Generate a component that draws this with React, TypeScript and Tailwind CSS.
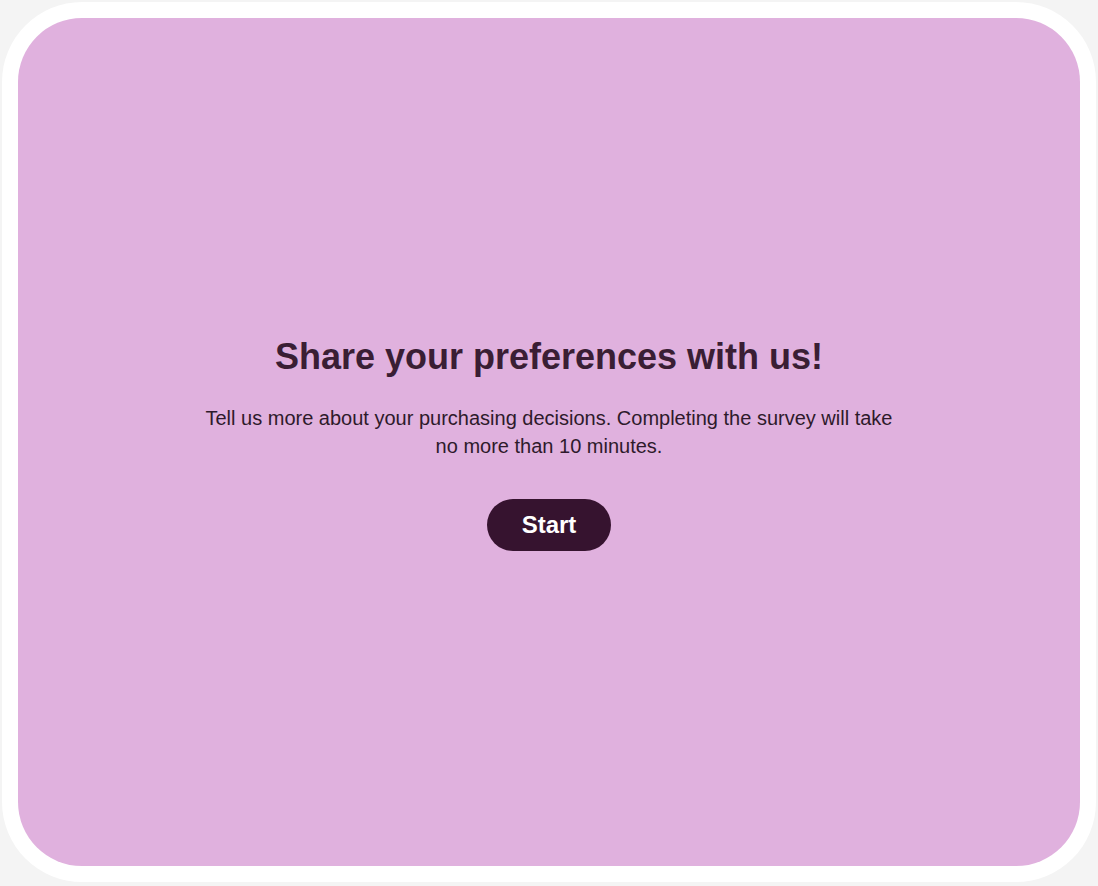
const App = () => {
  return (
    <div className="w-full h-[886px] bg-[#f4f4f4] px-[2px] pt-[2px]" style={{ fontFamily: '"Liberation Sans", Arial, sans-serif' }}>
      <div className="h-[880px] bg-white rounded-[80px] p-4">
        <div className="h-full bg-[#e0b1de] rounded-[64px] pt-[4px] flex flex-col items-center justify-center text-center">
          <h1 className="text-[36px] leading-[40px] font-bold text-[#3a1e34]">Share your preferences with us!</h1>
          <p className="mt-[27px] max-w-[700px] text-[20px] leading-[28px] text-[#2e1a2b]">
            Tell us more about your purchasing decisions. Completing the survey will take no more than 10 minutes.
          </p>
          <button className="mt-[39px] h-[52px] w-[124px] rounded-full bg-[#36132f] text-white text-[24px] font-bold">
            Start
          </button>
        </div>
      </div>
    </div>
  )
}

export default App
